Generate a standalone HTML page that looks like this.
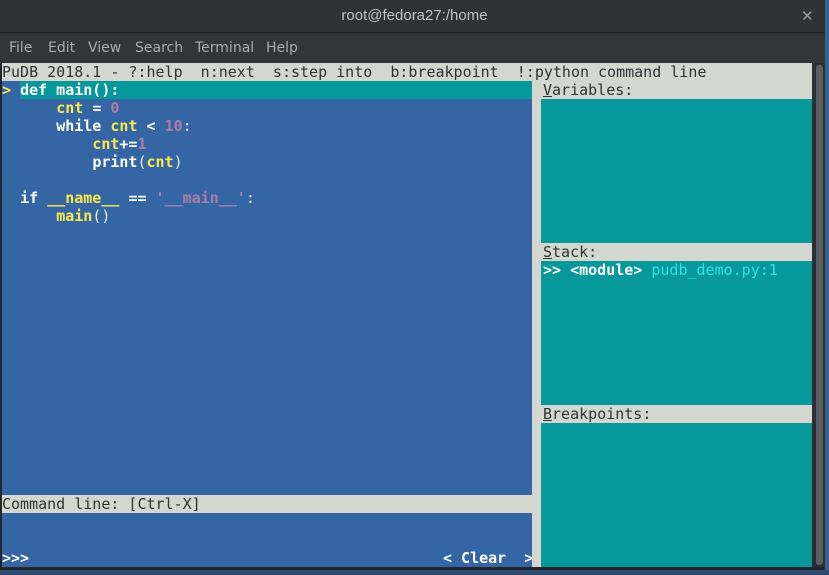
<!DOCTYPE html>
<html><head><meta charset="utf-8"><style>
*{margin:0;padding:0;box-sizing:border-box}
body{width:829px;height:575px;overflow:hidden;background:#2b2f33;position:relative;font-family:"DejaVu Sans Mono","Liberation Mono",monospace}
.a{position:absolute}
.t{font-size:15px;line-height:18px;white-space:pre;letter-spacing:0}
.title{left:0;top:0;width:829px;height:33px;background:#2f3337;border-bottom:1px solid #1f2225;color:#c0c3c5;font-family:"Liberation Sans","DejaVu Sans",sans-serif;font-size:15px;text-align:center;line-height:32px}
.menu{left:0;top:34px;width:829px;height:29px;background:#32363a;color:#a9acae;font-family:"DejaVu Sans","Liberation Sans",sans-serif;font-size:14px;line-height:28px}
.menu span{position:absolute;top:0}
.g{background:#d3d7cf;color:#2e3436}
.b{background:#3465a4}
.c{background:#06989a}
.y{color:#fce94f;font-weight:bold}
.w{color:#fff;font-weight:bold}
.p{color:#ad7fa8;font-weight:bold}
.l{color:#eeeeec}
u{text-decoration:underline}
.r{padding-left:2px}
</style></head><body>
<div class="a title">root@fedora27:/home</div>
<div class="a" style="left:801px;top:6px;color:#9a9da0;font-size:15px;font-weight:bold;font-family:'DejaVu Sans',sans-serif;line-height:20px">✕</div>
<div class="a menu"><span style="left:9px">File</span><span style="left:48px">Edit</span><span style="left:88px">View</span><span style="left:135px">Search</span><span style="left:195px">Terminal</span><span style="left:266px">Help</span></div>
<div class="a" style="left:0;top:63px;width:2px;height:507px;background:#23262a"></div>
<div class="a t g" style="left:2px;top:63px;width:810px;height:18px">PuDB 2018.1 - ?:help  n:next  s:step into  b:breakpoint  !:python command line</div>
<div class="a b" style="left:2px;top:81px;width:530px;height:414px"></div>
<div class="a c" style="left:20px;top:81px;width:512px;height:18px"></div>
<div class="a t" style="left:2px;top:81px"><span class="y">&gt;</span> <span class="w">def main():</span></div>
<div class="a t" style="left:2px;top:99px">      <span class="y">cnt</span> <span class="w">=</span> <span class="p">0</span></div>
<div class="a t" style="left:2px;top:117px">      <span class="w">while</span> <span class="y">cnt</span> <span class="w">&lt;</span> <span class="p">10</span><span class="l">:</span></div>
<div class="a t" style="left:2px;top:135px">          <span class="y">cnt</span><span class="w">+=</span><span class="p">1</span></div>
<div class="a t" style="left:2px;top:153px">          <span class="w">print</span><span class="l">(</span><span class="y">cnt</span><span class="l">)</span></div>
<div class="a t" style="left:2px;top:189px">  <span class="w">if</span> <span class="y">__name__</span> <span class="w">==</span> <span class="p">'__main__'</span><span class="l">:</span></div>
<div class="a t" style="left:2px;top:207px">      <span class="y">main</span><span class="l">()</span></div>
<div class="a t g" style="left:2px;top:495px;width:530px;height:18px">Command line: [Ctrl-X]</div>
<div class="a b" style="left:2px;top:513px;width:530px;height:54px"></div>
<div class="a t w" style="left:2px;top:549px">&gt;&gt;&gt;</div>
<div class="a t w" style="left:443px;top:549px">&lt; Clear  &gt;</div>
<div class="a g" style="left:532px;top:81px;width:9px;height:486px"></div>
<div class="a t g r" style="left:541px;top:81px;width:271px;height:18px"><u>V</u>ariables:</div>
<div class="a c" style="left:541px;top:99px;width:271px;height:144px"></div>
<div class="a t g r" style="left:541px;top:243px;width:271px;height:18px"><u>S</u>tack:</div>
<div class="a c t r" style="left:541px;top:261px;width:271px;height:144px"><span class="w">&gt;&gt; &lt;module&gt;</span> <span style="color:#34e2e2">pudb_demo.py:1</span></div>
<div class="a t g r" style="left:541px;top:405px;width:271px;height:18px"><u>B</u>reakpoints:</div>
<div class="a c" style="left:541px;top:423px;width:271px;height:144px"></div>
<div class="a" style="left:812px;top:63px;width:13px;height:507px;background:#2b2f33"></div>
<div class="a" style="left:816px;top:65px;width:7px;height:500px;background:#5b5f62;border-radius:3px"></div>
<div class="a" style="left:825px;top:0;width:4px;height:575px;background:#3b5f8f"></div>
<div class="a" style="left:0;top:567px;width:825px;height:3px;background:#23262a"></div>
<div class="a" style="left:0;top:570px;width:829px;height:5px;background:#2e4a6e"></div>
</body></html>
